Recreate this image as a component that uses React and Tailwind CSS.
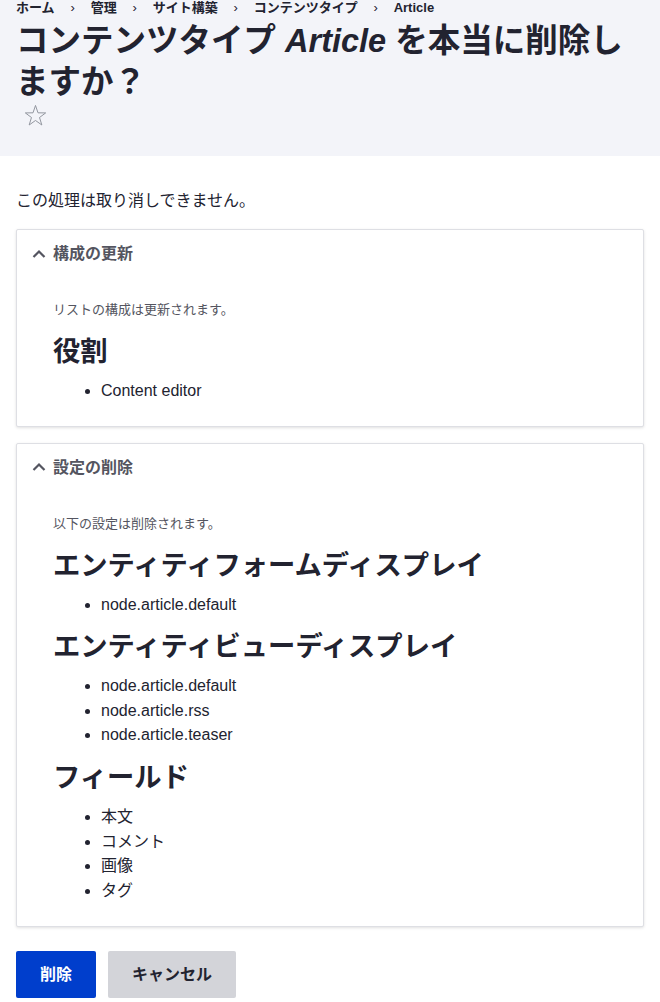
import React from "react";

const font = { fontFamily: '"Liberation Sans", "Noto Sans CJK JP", sans-serif' };

function Chevron() {
  return (
    <svg className="absolute left-[15px] top-1/2 -translate-y-1/2" width="14" height="9" viewBox="0 0 14 9">
      <path d="M1.5 7.5 L7 2 L12.5 7.5" fill="none" stroke="#545560" strokeWidth="2.2" />
    </svg>
  );
}

function Box({ title, desc, groups, bottom }) {
  return (
    <div className="border border-[#dedfe4] rounded-[2px] bg-white shadow-[0_1px_3px_rgba(0,0,0,0.12)]">
      <div className="relative pl-[36px] pt-[15px] pb-[14px] text-[16px] leading-[18px] font-bold text-[#545560]">
        <Chevron />
        {title}
      </div>
      <div className={`pl-[36px] pr-4 pt-[24px] ${bottom}`}>
        <p className="text-[13px] leading-[18px] text-[#545560]">{desc}</p>
        {groups.map((g, i) => (
          <div key={i} className={i === 0 ? "mt-[17px]" : "mt-[14px]"}>
            <h2 className="text-[27.3px] leading-[32px] font-bold text-[#222330]">{g.h}</h2>
            <ul className="mt-[11px] list-disc pl-[48px] text-[16px] leading-[24.6px] text-[#222330]">
              {g.items.map((it) => (
                <li key={it}>{it}</li>
              ))}
            </ul>
          </div>
        ))}
      </div>
    </div>
  );
}

export default function App() {
  const crumbs = ["ホーム", "管理", "サイト構築", "コンテンツタイプ", "Article"];
  return (
    <div style={font} className="min-h-[1002px] bg-white text-[#222330]">
      <div className="bg-[#f3f4f9] h-[156px] px-4">
        <nav className="flex items-center h-[15px] text-[13px] leading-[15px] font-bold text-[#222330]">
          {crumbs.map((c, i) => (
            <React.Fragment key={c}>
              {i > 0 && <span className="w-[36px] text-center font-normal">›</span>}
              <span>{c}</span>
            </React.Fragment>
          ))}
        </nav>
        <h1 className="mt-[5.5px] text-[32.5px] leading-[41px] font-bold">
          コンテンツタイプ <em>Article</em> を本当に削除しますか？
        </h1>
        <div className="mt-[1px] pl-[8px]">
          <svg width="23" height="23" viewBox="0 0 24 24">
            <path
              d="M12 1.5 L14.6 9.2 L22.6 9.3 L16.2 14.1 L18.6 21.9 L12 17.2 L5.4 21.9 L7.8 14.1 L1.4 9.3 L9.4 9.2 Z"
              fill="none"
              stroke="#8e929c"
              strokeWidth="1"
              strokeLinejoin="miter"
            />
          </svg>
        </div>
      </div>
      <div className="px-4">
        <p className="mt-[33px] text-[16px] leading-[24px]">この処理は取り消しできません。</p>
        <div className="mt-[16px]">
          <Box
            title="構成の更新"
            desc="リストの構成は更新されます。"
            bottom="pb-[22px]"
            groups={[{ h: "役割", items: ["Content editor"] }]}
          />
        </div>
        <div className="mt-[16px]">
          <Box
            title="設定の削除"
            desc="以下の設定は削除されます。"
            bottom="pb-[23px]"
            groups={[
              { h: "エンティティフォームディスプレイ", items: ["node.article.default"] },
              {
                h: "エンティティビューディスプレイ",
                items: ["node.article.default", "node.article.rss", "node.article.teaser"],
              },
              { h: "フィールド", items: ["本文", "コメント", "画像", "タグ"] },
            ]}
          />
        </div>
        <div className="mt-[24px] flex gap-[12px]">
          <button className="h-[47px] w-[80px] rounded-[2px] bg-[#003ecc] text-white text-[16px] font-bold">
            削除
          </button>
          <button className="h-[47px] w-[128px] rounded-[2px] bg-[#d3d4d9] text-[#222330] text-[16px] font-bold">
            キャンセル
          </button>
        </div>
      </div>
    </div>
  );
}
